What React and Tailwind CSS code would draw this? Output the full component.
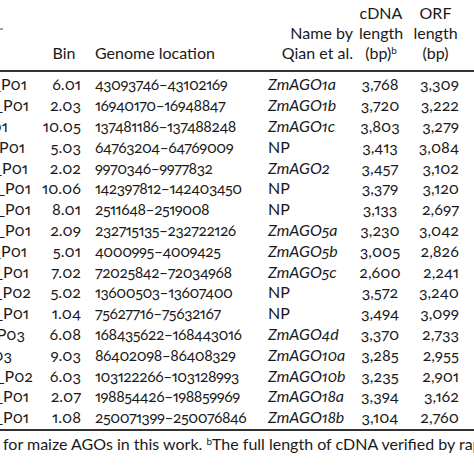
const rows = [
  { id: "GRMZM2G441583_P01", end: 27, bin: "6.01", loc: "43093746–43102169", name: "ZmAGO1a", nm: true, cdna: "3,768", orf: "3,309" },
  { id: "GRMZM2G039455_P01", end: 29, bin: "2.03", loc: "16940170–16948847", name: "ZmAGO1b", nm: true, cdna: "3,720", orf: "3,222" },
  { id: "AC209208.3_FGP001", end: 8, bin: "10.05", loc: "137481186–137488248", name: "ZmAGO1c", nm: true, cdna: "3,803", orf: "3,279" },
  { id: "GRMZM2G361518_P01", end: 25, bin: "5.03", loc: "64763204–64769009", name: "NP", cdna: "3,413", orf: "3,084" },
  { id: "GRMZM2G007791_P01", end: 28, bin: "2.02", loc: "9970346–9977832", name: "ZmAGO2", nm: true, cdna: "3,457", orf: "3,102" },
  { id: "GRMZM2G354867_P01", end: 31, bin: "10.06", loc: "142397812–142403450", name: "NP", cdna: "3,379", orf: "3,120" },
  { id: "GRMZM2G347402_P01", end: 31, bin: "8.01", loc: "2511648–2519008", name: "NP", cdna: "3,133", orf: "2,697" },
  { id: "GRMZM2G059033_P01", end: 31, bin: "2.09", loc: "232715135–232722126", name: "ZmAGO5a", nm: true, cdna: "3,230", orf: "3,042" },
  { id: "GRMZM2G461936_P01", end: 27, bin: "5.01", loc: "4000995–4009425", name: "ZmAGO5b", nm: true, cdna: "3,005", orf: "2,826" },
  { id: "GRMZM2G123063_P01", end: 29, bin: "7.02", loc: "72025842–72034968", name: "ZmAGO5c", nm: true, cdna: "2,600", orf: "2,241" },
  { id: "GRMZM2G141818_P02", end: 31, bin: "5.02", loc: "13600503–13607400", name: "NP", cdna: "3,572", orf: "3,240" },
  { id: "GRMZM2G589579_P01", end: 29, bin: "1.04", loc: "75627716–75632167", name: "NP", cdna: "3,494", orf: "3,099" },
  { id: "GRMZM2G700208_P03", end: 25, bin: "6.08", loc: "168435622–168443016", name: "ZmAGO4d", nm: true, cdna: "3,370", orf: "2,733" },
  { id: "GRMZM2G079080_P03", end: 12, bin: "9.03", loc: "86402098–86408329", name: "ZmAGO10a", nm: true, cdna: "3,285", orf: "2,955" },
  { id: "GRMZM2G149526_P02", end: 33, bin: "6.03", loc: "103122266–103128993", name: "ZmAGO10b", nm: true, cdna: "3,235", orf: "2,901" },
  { id: "GRMZM2G105250_P01", end: 29, bin: "2.07", loc: "198854426–198859969", name: "ZmAGO18a", nm: true, cdna: "3,394", orf: "3,162" },
  { id: "GRMZM2G457370_P01", end: 29, bin: "1.08", loc: "250071399–250076846", name: "ZmAGO18b", nm: true, cdna: "3,104", orf: "2,760" },
];

const cols = "grid grid-cols-[40px_41px_187px_87px_48px_59px]";

export default function App() {
  return (
    <div
      className="relative w-[474px] h-[474px] overflow-hidden bg-white text-[#1a1a1a] text-[16px] oldstyle-nums proportional-nums"
      style={{ fontFamily: "Lato, 'Noto Sans', sans-serif" }}
    >
      {/* cut-off title mark */}
      <div className="absolute left-0 top-[28px] w-[3px] h-[2px] bg-gray-400" />

      {/* header */}
      <div className={`${cols} h-[70px] items-end pb-[7px] leading-[20px]`}>
        <div />
        <div className="text-center pl-[7px]">Bin</div>
        <div className="pl-[14px]">Genome location</div>
        <div className="text-right whitespace-nowrap pr-[2px]">
          Name by
          <br />
          Qian et al.
        </div>
        <div className="text-center pl-[4px]">
          cDNA
          <br />
          length
          <br />
          (bp)<sup className="text-[10px]">b</sup>
        </div>
        <div className="text-center pl-[6px]">
          ORF
          <br />
          length
          <br />
          (bp)
        </div>
      </div>
      <div className="h-[2px] bg-[#333]" />

      {/* body */}
      <div className="pt-[2px]">
        {rows.map((r, i) => (
          <div key={i} className={`${cols} h-[20.8px] items-center leading-[20px]`}>
            <div className="overflow-hidden flex justify-end">
              <span className="whitespace-nowrap" style={{ marginRight: 40 - r.end }}>
                {r.id}
              </span>
            </div>
            <div className="text-right">{r.bin}</div>
            <div className="pl-[14px] whitespace-nowrap text-[15.5px] tracking-[-0.45px]">{r.loc}</div>
            <div className={r.nm ? "italic" : ""}>{r.name}</div>
            <div className="text-center pl-[2px]">{r.cdna}</div>
            <div className="text-right pr-[3px]">{r.orf}</div>
          </div>
        ))}
      </div>
      <div className="mt-[1px] h-[2px] bg-[#333]" />

      {/* footnote */}
      <div className="mt-[3px] whitespace-nowrap leading-[20px] pl-[3px]">
        for maize AGOs in this work. <sup className="text-[10px]">b</sup>The full length of cDNA verified by rapid amplification of cDNA ends
      </div>
    </div>
  );
}
